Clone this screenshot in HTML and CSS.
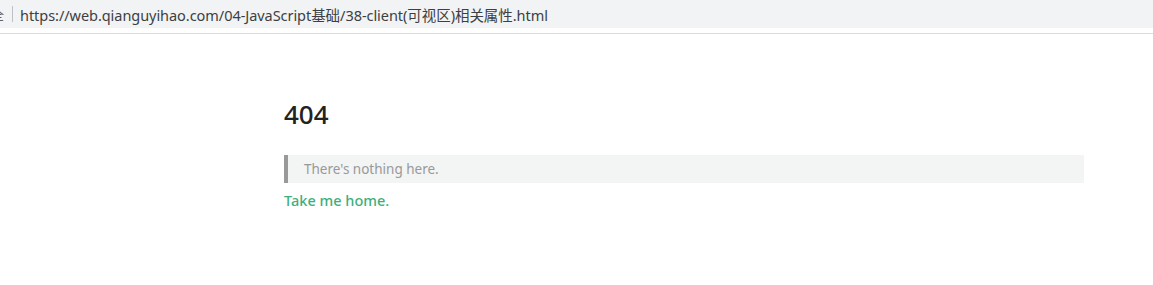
FILE: index.html
```html
<!DOCTYPE html>
<html>
<head>
    <meta charset="UTF-8">
    <title>404</title>
    <link rel="stylesheet" href="styles.css">
</head>
<body>
    <div class="urlbar">
        <span class="secure">全</span>
        <span class="sep"></span>
        <span class="url">https://web.qianguyihao.com/04-JavaScript基础/38-client(可视区)相关属性.html</span>
    </div>
    <div class="divider"></div>
    <div class="page">
        <div class="content">
            <h1>404</h1>
            <blockquote>There's nothing here.</blockquote>
            <a href="#" class="home">Take me home.</a>
        </div>
    </div>
</body>
</html>
```

FILE: styles.css
```css
body {
    margin: 0;
    font-family: "Noto Sans", "Noto Sans CJK SC", sans-serif;
    background-color: white;
}

.urlbar {
    height: 28px;
    background-color: #f1f3f4;
    display: flex;
    align-items: center;
    overflow: hidden;
}

.divider {
    height: 1px;
    margin-top: 5px;
    background-color: #dadce0;
}

.secure {
    font-size: 14px;
    color: #5f6368;
    margin-left: -10px;
    width: 14px;
}

.sep {
    width: 1px;
    height: 16px;
    background-color: #bdc1c6;
    margin-left: 8px;
    margin-right: 7px;
}

.url {
    font-size: 14.5px;
    color: #3c4043;
    letter-spacing: -0.05px;
}

.page {
    padding-left: 284px;
}

.content {
    width: 800px;
}

h1 {
    font-size: 26px;
    font-weight: 500;
    color: #222;
    margin: 64px 0 0 0;
    line-height: 32px;
}

blockquote {
    margin: 25px 0 0 0;
    background-color: #f3f4f4;
    border-left: 4px solid #999;
    padding: 0 16px;
    height: 28px;
    line-height: 29px;
    font-size: 13.5px;
    color: #999;
}

.home {
    display: inline-block;
    margin-top: 7px;
    font-size: 14.5px;
    font-weight: 500;
    color: #3eaf7c;
    text-decoration: none;
}
```
